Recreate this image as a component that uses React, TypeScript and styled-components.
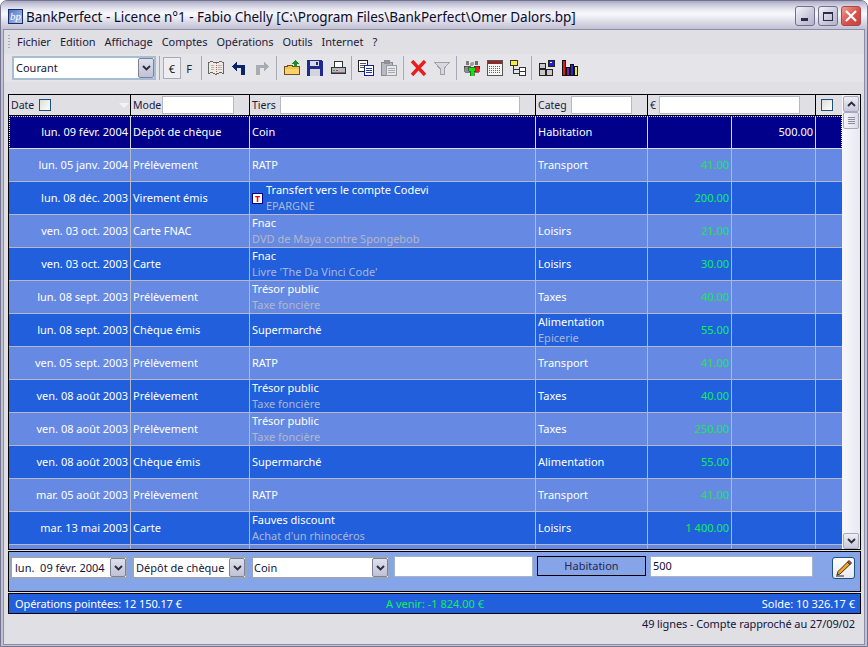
import React from "react";
import styled, { createGlobalStyle } from "styled-components";

const FONT = `"Noto Sans", "DejaVu Sans", sans-serif`;
const COLS = "122px 119px 286px 112px 84px 84px 26px";

const GlobalStyle = createGlobalStyle`
    html, body { margin: 0; padding: 0; background: #fff; overflow: hidden; }
    * { box-sizing: border-box; }
`;

const Window = styled.div`
    width: 868px;
    height: 647px;
    display: flex;
    flex-direction: column;
    padding: 0 2px 1px;
    border: 1px solid #74748f;
    border-radius: 7px 7px 0 0;
    background: #c2c2d6;
    font-family: ${FONT};
    font-size: 11px;
    color: #10103a;
`;

const TitleBar = styled.div`
    height: 28px;
    flex: none;
    display: flex;
    align-items: center;
    margin: 0 -2px;
    padding: 2px 6px 0 7px;
    border-radius: 6px 6px 0 0;
    background: linear-gradient(#a9a8c4 0, #c4c4d8 3px, #e6e6f0 8px, #f8f8fc 13px, #e2e2ec 19px, #c4c4d6 27px);
`;

const Logo = styled.div`
    width: 15px;
    height: 15px;
    display: flex;
    align-items: center;
    justify-content: center;
    border: 1px solid #1c2c6a;
    background: linear-gradient(135deg, #4d74c8, #b4c6ec);
    color: #fff;
    font-family: "Liberation Serif", serif;
    font-size: 11px;
    font-style: italic;
    line-height: 1;
`;

const TitleText = styled.div`
    margin: 1px 0 0 3px;
    flex: 1;
    font-size: 13.5px;
    letter-spacing: -0.04px;
    color: #0b0b2c;
    white-space: nowrap;
`;

const WinButtons = styled.div`
    display: flex;
    gap: 3px;
`;

const WinButton = styled.div<{ $close?: boolean }>`
    width: 20px;
    height: 20px;
    display: flex;
    align-items: center;
    justify-content: center;
    border: 1px solid ${(p) => (p.$close ? "#a84848" : "#6f6f8e")};
    border-radius: 3px;
    background: ${(p) =>
        p.$close
            ? "linear-gradient(135deg, #ee9f94, #d9504a 55%, #c04444)"
            : "linear-gradient(135deg, #f4f4f9, #c8c8da 60%, #b4b4ca)"};
`;

const Client = styled.div`
    flex: 1;
    display: flex;
    flex-direction: column;
    min-height: 0;
    padding: 0 3px 0 4px;
    border: 1px solid #8d8da8;
    background: #e0dfe3;
`;

const MenuBar = styled.div`
    height: 24px;
    flex: none;
    display: flex;
    align-items: center;
    position: relative;
    padding: 0 0 1px 9px;
    gap: 9px;
    letter-spacing: -0.05px;
    &::before {
        content: "";
        position: absolute;
        left: 0;
        top: 5px;
        width: 2px;
        height: 14px;
        background: repeating-linear-gradient(#a8a8b8 0 1px, transparent 1px 3px);
    }
`;

const MenuItem = styled.span`
    color: #1a1a3c;
`;

const ToolBar = styled.div`
    height: 28px;
    flex: none;
    display: flex;
    align-items: center;
    margin: 0 -3px 0 -4px;
    padding-left: 8px;
    background: #e4e4e9;
`;

const Sep = styled.div<{ $l: number; $r: number }>`
    width: 1px;
    height: 24px;
    margin: 0 ${(p) => p.$r}px 0 ${(p) => p.$l}px;
    background: #a8a8b4;
`;

const ToolIcons = styled.div`
    display: flex;
    gap: 7px;
`;

const ComboBox = styled.div<{ $w: number; $h?: number; $border?: string }>`
    width: ${(p) => p.$w}px;
    height: ${(p) => p.$h ?? 23}px;
    flex: none;
    display: flex;
    align-items: stretch;
    border: 2px solid ${(p) => p.$border ?? "#98a6bc"};
    background: #fff;
`;

const ComboText = styled.div<{ $pad: number }>`
    flex: 1;
    min-width: 0;
    padding-left: ${(p) => p.$pad}px;
    line-height: 20px;
    white-space: pre;
    overflow: hidden;
    color: #14143c;
`;

const ComboArrow = styled.div`
    width: 16px;
    flex: none;
    display: flex;
    align-items: center;
    justify-content: center;
    border: 1px solid #7d8296;
    border-radius: 2px;
    background: linear-gradient(#dfe0ec, #bfc2d6);
`;

const CurrencyOn = styled.div`
    width: 18px;
    height: 22px;
    display: flex;
    align-items: center;
    justify-content: center;
    border: 1px solid #a8a8b8;
    background: #eeeef2;
    color: #111;
`;

const CurrencyOff = styled.div`
    width: 16px;
    text-align: center;
    color: #222;
`;

const Table = styled.div`
    margin: 12px 0 0;
    height: 456px;
    flex: none;
    display: flex;
    border: 1px solid #000;
    background: #fff;
`;

const GridArea = styled.div`
    width: 833px;
    flex: none;
    display: flex;
    flex-direction: column;
`;

const Head = styled.div`
    height: 21px;
    flex: none;
    display: grid;
    grid-template-columns: 122px 119px 286px 112px 168px 26px;
    border-bottom: 1px solid #000;
    background: #e0dfe3;
    font-size: 10.5px;
`;

const HeadCell = styled.div<{ $last?: boolean }>`
    display: flex;
    align-items: center;
    padding: 0 ${(p) => (p.$last ? 0 : 15)}px 0 2px;
    border-right: ${(p) => (p.$last ? "none" : "1px solid #000")};
    color: #1a1a40;
`;

const HeadInput = styled.div<{ $w: number }>`
    width: ${(p) => p.$w}px;
    height: 18px;
    flex: none;
    margin-left: auto;
    border: 1px solid #b4b8c4;
    background: #fff;
`;

const HeadCheck = styled.div<{ $ml: number }>`
    width: 12px;
    height: 12px;
    flex: none;
    margin-left: ${(p) => p.$ml}px;
    border: 1px solid #1c5180;
    background: linear-gradient(135deg, #dcdcd4, #fff);
`;

const SortMark = styled.div`
    position: absolute;
    left: 119px;
    top: 103px;
    width: 0;
    height: 0;
    border-left: 5px solid transparent;
    border-right: 5px solid transparent;
    border-top: 5px solid #f4f4f6;
`;

const Rows = styled.div`
    flex: 1;
    min-height: 0;
    overflow: hidden;
`;

const TONES = { sel: "#00008b", light: "#668ae3", dark: "#215fdd" };

const Row = styled.div<{ $tone: keyof typeof TONES }>`
    height: 33px;
    display: grid;
    grid-template-columns: ${COLS};
    border-bottom: 1px solid ${(p) => (p.$tone === "sel" ? "#d8d8e8" : "#b4b8c8")};
    background: ${(p) => TONES[p.$tone]};
    color: #fff;
    ${(p) => p.$tone === "sel" && "outline: 1px dotted #f0f070; outline-offset: -1px;"}
`;

const Cell = styled.div<{ $right?: boolean; $sel?: boolean; $last?: boolean }>`
    display: flex;
    flex-direction: column;
    justify-content: center;
    align-items: ${(p) => (p.$right ? "flex-end" : "flex-start")};
    padding: 0 2px;
    border-right: ${(p) => (p.$last ? "none" : `1px solid ${p.$sel ? "#d8d8e8" : "#b4b8c8"}`)};
    line-height: 16px;
    white-space: nowrap;
    overflow: hidden;
`;

const Amount = styled.span<{ $light?: boolean }>`
    color: ${(p) => (p.$light ? "#1be84a" : "#10f05a")};
`;

const Sub = styled.div<{ $light?: boolean }>`
    color: ${(p) => (p.$light ? "#b2b8c8" : "#aab8d8")};
`;

const Transfer = styled.div`
    display: flex;
    align-items: center;
    gap: 3px;
`;

const TBadge = styled.div`
    width: 11px;
    height: 11px;
    display: flex;
    align-items: center;
    justify-content: center;
    border: 1px solid #000080;
    background: #fff;
    color: #f00000;
    font-size: 9px;
    font-weight: 700;
    line-height: 1;
`;

const ScrollBar = styled.div`
    width: 18px;
    flex: none;
    display: flex;
    flex-direction: column;
    padding: 1px 1px 0;
    background: linear-gradient(90deg, #f8f8fc, #e8e8f2);
`;

const ScrollBtn = styled.div`
    height: 16px;
    flex: none;
    display: flex;
    align-items: center;
    justify-content: center;
    border: 1px solid #a8a8bc;
    border-radius: 2px;
    background: linear-gradient(#eeeef4, #c8c8da);
`;

const ScrollThumb = styled.div`
    height: 17px;
    flex: none;
    display: flex;
    align-items: center;
    justify-content: center;
    border: 1px solid #a8a8bc;
    border-radius: 2px;
    background: linear-gradient(90deg, #f4f4f8, #dcdce8);
`;

const Grip = styled.div`
    width: 7px;
    height: 7px;
    background: repeating-linear-gradient(#8c8ca0 0 1px, transparent 1px 2px);
`;

const ScrollTrack = styled.div`
    flex: 1;
`;

const EditPanel = styled.div`
    margin-top: 1px;
    height: 41px;
    flex: none;
    display: flex;
    align-items: flex-start;
    gap: 4px;
    padding: 4px 1px 0;
    border: 1px solid #000;
    background: #86a5e8;
`;

const EditInput = styled.div<{ $w: number }>`
    width: ${(p) => p.$w}px;
    height: 21px;
    flex: none;
    padding-left: 2px;
    border: 1px solid #a4b4cc;
    background: #fff;
    line-height: 18px;
    color: #10103a;
`;

const CategButton = styled.div`
    width: 109px;
    height: 20px;
    flex: none;
    border: 1px solid #000;
    text-align: center;
    line-height: 18px;
    color: #26264e;
`;

const PencilButton = styled.div`
    width: 23px;
    height: 22px;
    margin: 1px 0 0 15px;
    flex: none;
    display: flex;
    align-items: center;
    justify-content: center;
    border: 1px solid #1c5180;
    border-radius: 3px;
    background: linear-gradient(#ffffff, #e8e8ee);
`;

const StatusBar = styled.div`
    margin-top: 1px;
    height: 21px;
    flex: none;
    display: grid;
    grid-template-columns: 1fr auto 1fr;
    align-items: center;
    padding: 0 5px 0 6px;
    border: 1px solid #000;
    background: #215fdd;
    color: #fff;
`;

const StatusLeft = styled.div`
    letter-spacing: -0.1px;
`;

const StatusGreen = styled.div`
    color: #10f060;
`;

const StatusRight = styled.div`
    text-align: right;
`;

const Footer = styled.div`
    padding: 2px 6px 0 0;
    text-align: right;
    letter-spacing: -0.1px;
    color: #14143c;
`;

const Chevron = ({ up }: { up?: boolean }) => (
    <svg width="9" height="6" viewBox="0 0 9 6">
        <path d={up ? "M1 5L4.5 1.5L8 5" : "M1 1L4.5 4.5L8 1"} fill="none" stroke="#2a2a3c" strokeWidth="1.8" />
    </svg>
);

const Svg = ({ children }: { children: React.ReactNode }) => (
    <svg width="16" height="16" viewBox="0 0 16 16" shapeRendering="crispEdges">
        {children}
    </svg>
);

const BookIcon = () => (
    <Svg>
        <path d="M0.5 2.5L4 1.5L8 3L12 1.5L15.5 2.5V13.5L12 12.5L8 14.5L4 12.5L0.5 13.5Z" fill="#ecebe6" stroke="#666" />
        <path d="M8 3V14" stroke="#c86060" strokeDasharray="1 1" />
        <path d="M2.5 5H6M2.5 7H6M2.5 9H6M10 5H13.5M10 7H13.5M10 9H13.5" stroke="#c0b4b4" />
    </Svg>
);

const BackIcon = ({ color = "#0a246a" }: { color?: string }) => (
    <Svg>
        <path d="M6 2L1 6.5L6 11V8H10V15H14V4.5H6Z" fill={color} />
    </Svg>
);

const ForwardIcon = () => (
    <Svg>
        <path d="M10 2L15 6.5L10 11V8H6V15H2V4.5H10Z" fill="#aaaab2" />
    </Svg>
);

const FolderIcon = () => (
    <Svg>
        <path d="M0.5 6.5H3L4 5H8V6.5H15.5V14.5H0.5Z" fill="#f6c14a" stroke="#6a5320" />
        <path d="M1 9H15V14H1Z" fill="#fbd26b" />
        <path d="M11 0L14.5 3.5H12.5V6.5H9.5V3.5H7.5Z" fill="#1d8a2c" />
    </Svg>
);

const SaveIcon = () => (
    <Svg>
        <path d="M0 0H14L16 2V16H0Z" fill="#1f2a8c" />
        <rect x="3" y="1" width="9" height="5" fill="#d8d8e4" />
        <rect x="9" y="2" width="2" height="3" fill="#1f2a8c" />
        <rect x="3" y="9" width="10" height="7" fill="#d4d4dc" />
    </Svg>
);

const PrintIcon = () => (
    <Svg>
        <rect x="4.5" y="1.5" width="8" height="6" fill="#fff" stroke="#333" />
        <path d="M1.5 7.5H15.5V13.5H1.5Z" fill="#b8b8c0" stroke="#333" />
        <rect x="3" y="10" width="2" height="1" fill="#30b030" />
        <rect x="6" y="10" width="2" height="1" fill="#d03030" />
        <rect x="2" y="12" width="13" height="1" fill="#707078" />
    </Svg>
);

const CopyIcon = () => (
    <Svg>
        <rect x="0.5" y="0.5" width="9" height="11" fill="#fff" stroke="#222" />
        <path d="M2 3H8M2 5H8M2 7H8" stroke="#555" />
        <rect x="6.5" y="5.5" width="9" height="10" fill="#fff" stroke="#10208c" />
        <path d="M8 8H14M8 10H14M8 12H14" stroke="#2038b0" />
    </Svg>
);

const PasteIcon = () => (
    <Svg>
        <rect x="0.5" y="2.5" width="11" height="13" fill="#b8b8c0" stroke="#88888f" />
        <rect x="3" y="0" width="6" height="4" fill="#90909a" />
        <rect x="5.5" y="5.5" width="10" height="10" fill="#e8e8ec" stroke="#9a9aa2" />
        <path d="M7 8H14M7 10H14M7 12H14" stroke="#a8a8b0" />
    </Svg>
);

const DeleteIcon = () => (
    <svg width="17" height="16" viewBox="0 0 17 16">
        <path d="M2 1L15 15M15 1L2 15" stroke="#e81c1c" strokeWidth="3.4" />
    </svg>
);

const FunnelIcon = () => (
    <Svg>
        <path d="M0.5 2.5H15.5L10 8.5V14.5L6 14.5V8.5Z" fill="#d8d8de" stroke="#a0a0a8" />
    </Svg>
);

const PeopleIcon = () => (
    <Svg>
        <circle cx="3.5" cy="3" r="2" fill="#7c7c7c" />
        <circle cx="12.5" cy="3" r="2" fill="#6c6c6c" />
        <path d="M0 6H6V12H1Z" fill="#8c8c8c" stroke="#333" strokeWidth="0.6" />
        <path d="M10 6H16L15 12H11Z" fill="#e82020" stroke="#402020" strokeWidth="0.6" />
        <circle cx="8" cy="4" r="2" fill="#a0a0a0" />
        <path d="M4.5 7H11.5V11H10V16H6V11H4.5Z" fill="#18e018" stroke="#104010" strokeWidth="0.6" />
    </Svg>
);

const CalendarIcon = () => (
    <Svg>
        <rect x="0.5" y="0.5" width="15" height="15" fill="#f4f4f0" stroke="#555" />
        <rect x="1" y="1" width="14" height="3" fill="#8c2a2a" />
        <path d="M2 6H14M2 8H14M2 10H14M2 12H14" stroke="#666" strokeDasharray="1 1" />
    </Svg>
);

const TreeIcon = () => (
    <Svg>
        <rect x="0.5" y="0.5" width="7" height="5" fill="#f8ee30" stroke="#333" />
        <path d="M3.5 6V13.5H9M3.5 9.5H9" fill="none" stroke="#333" />
        <rect x="9.5" y="7.5" width="6" height="4" fill="#fff" stroke="#333" />
        <rect x="9.5" y="11.5" width="6" height="4" fill="#fff" stroke="#333" />
    </Svg>
);

const WindowsIcon = () => (
    <Svg>
        <rect x="0.5" y="3.5" width="6" height="5" fill="#c8c8c8" stroke="#222" />
        <rect x="0.5" y="9.5" width="6" height="6" fill="#c8c8c8" stroke="#222" />
        <rect x="7.5" y="9.5" width="6" height="6" fill="#c8c8c8" stroke="#222" />
        <rect x="9.5" y="0.5" width="6" height="6" fill="#1c1ce0" stroke="#222" />
        <rect x="11" y="2" width="2" height="1" fill="#fff" />
    </Svg>
);

const ChartIcon = () => (
    <Svg>
        <rect x="0.5" y="0.5" width="3" height="15" fill="#e81818" stroke="#111" />
        <rect x="4.5" y="7.5" width="3" height="8" fill="#7a20a0" stroke="#111" />
        <rect x="8.5" y="4.5" width="3" height="11" fill="#2a2ac8" stroke="#111" />
        <rect x="12" y="6.5" width="3.5" height="9" fill="#f4ec18" stroke="#111" />
    </Svg>
);

const PencilIcon = () => (
    <svg width="18" height="18" viewBox="0 0 18 18">
        <path d="M5 15L2 16L3 12.5L12.5 3L15 5.5Z" fill="#f2a51e" stroke="#222" strokeWidth="0.9" />
        <path d="M12.5 3L14 1.5L16.5 4L15 5.5Z" fill="#dc4a30" stroke="#222" strokeWidth="0.9" />
        <path d="M1 17H9" stroke="#222" strokeWidth="1" />
    </svg>
);

type Op = {
    tone: "sel" | "light" | "dark";
    date: string;
    mode: string;
    tiers?: string;
    note?: string;
    transfer?: boolean;
    categ?: string;
    subCateg?: string;
    debit?: string;
    credit?: string;
};

const OPS: Op[] = [
    { tone: "sel", date: "lun. 09 févr. 2004", mode: "Dépôt de chèque", tiers: "Coin", categ: "Habitation", credit: "500.00" },
    { tone: "light", date: "lun. 05 janv. 2004", mode: "Prélèvement", tiers: "RATP", categ: "Transport", debit: "41.00" },
    { tone: "dark", date: "lun. 08 déc. 2003", mode: "Virement émis", tiers: "Transfert vers le compte Codevi", note: "EPARGNE", transfer: true, debit: "200.00" },
    { tone: "light", date: "ven. 03 oct. 2003", mode: "Carte FNAC", tiers: "Fnac", note: "DVD de Maya contre Spongebob", categ: "Loisirs", debit: "21.00" },
    { tone: "dark", date: "ven. 03 oct. 2003", mode: "Carte", tiers: "Fnac", note: "Livre 'The Da Vinci Code'", categ: "Loisirs", debit: "30.00" },
    { tone: "light", date: "lun. 08 sept. 2003", mode: "Prélèvement", tiers: "Trésor public", note: "Taxe foncière", categ: "Taxes", debit: "40.00" },
    { tone: "dark", date: "lun. 08 sept. 2003", mode: "Chèque émis", tiers: "Supermarché", categ: "Alimentation", subCateg: "Epicerie", debit: "55.00" },
    { tone: "light", date: "ven. 05 sept. 2003", mode: "Prélèvement", tiers: "RATP", categ: "Transport", debit: "41.00" },
    { tone: "dark", date: "ven. 08 août 2003", mode: "Prélèvement", tiers: "Trésor public", note: "Taxe foncière", categ: "Taxes", debit: "40.00" },
    { tone: "light", date: "ven. 08 août 2003", mode: "Prélèvement", tiers: "Trésor public", note: "Taxe foncière", categ: "Taxes", debit: "250.00" },
    { tone: "dark", date: "ven. 08 août 2003", mode: "Chèque émis", tiers: "Supermarché", categ: "Alimentation", debit: "55.00" },
    { tone: "light", date: "mar. 05 août 2003", mode: "Prélèvement", tiers: "RATP", categ: "Transport", debit: "41.00" },
    { tone: "dark", date: "mar. 13 mai 2003", mode: "Carte", tiers: "Fauves discount", note: "Achat d'un rhinocéros", categ: "Loisirs", debit: "1 400.00" },
    { tone: "light", date: "", mode: "" },
];

const MENU = ["Fichier", "Edition", "Affichage", "Comptes", "Opérations", "Outils", "Internet", "?"];

function OpRow({ op }: { op: Op }) {
    const sel = op.tone === "sel";
    const light = op.tone === "light";
    const tiers = (
        <>
            <div>{op.tiers}</div>
            {op.note && <Sub $light={light}>{op.note}</Sub>}
        </>
    );
    return (
        <Row $tone={op.tone}>
            <Cell $right $sel={sel}>{op.date}</Cell>
            <Cell $sel={sel}>{op.mode}</Cell>
            <Cell $sel={sel}>
                {op.transfer ? (
                    <Transfer>
                        <TBadge>T</TBadge>
                        <div>{tiers}</div>
                    </Transfer>
                ) : (
                    tiers
                )}
            </Cell>
            <Cell $sel={sel}>
                <div>{op.categ}</div>
                {op.subCateg && <Sub>{op.subCateg}</Sub>}
            </Cell>
            <Cell $right $sel={sel}>
                <Amount $light={light}>{op.debit}</Amount>
            </Cell>
            <Cell $right $sel={sel}>{op.credit}</Cell>
            <Cell $last />
        </Row>
    );
}

export default function App() {
    return (
        <Window>
            <GlobalStyle />
            <TitleBar>
                <Logo>bp</Logo>
                <TitleText>BankPerfect - Licence n°1 - Fabio Chelly [C:\Program Files\BankPerfect\Omer Dalors.bp]</TitleText>
                <WinButtons>
                    <WinButton>
                        <svg width="12" height="12" viewBox="0 0 12 12">
                            <rect x="2" y="8" width="7" height="3" fill="#2c2c48" />
                        </svg>
                    </WinButton>
                    <WinButton>
                        <svg width="12" height="12" viewBox="0 0 12 12">
                            <path d="M1 2H11V11H1Z M2 4V10H10V4Z" fill="#2c2c48" fillRule="evenodd" />
                        </svg>
                    </WinButton>
                    <WinButton $close>
                        <svg width="14" height="14" viewBox="0 0 14 14">
                            <path d="M2 2L12 12M12 2L2 12" stroke="#fff" strokeWidth="2.2" />
                        </svg>
                    </WinButton>
                </WinButtons>
            </TitleBar>
            <Client>
                <MenuBar>
                    {MENU.map((item) => (
                        <MenuItem key={item}>{item}</MenuItem>
                    ))}
                </MenuBar>
                <ToolBar>
                    <ComboBox $w={144} $h={24} $border="#a8bcd4">
                        <ComboText $pad={2}>Courant</ComboText>
                        <ComboArrow>
                            <Chevron />
                        </ComboArrow>
                    </ComboBox>
                    <Sep $l={3} $r={3} />
                    <CurrencyOn>€</CurrencyOn>
                    <CurrencyOff>F</CurrencyOff>
                    <Sep $l={4} $r={6} />
                    <ToolIcons>
                        <BookIcon />
                        <BackIcon />
                        <ForwardIcon />
                    </ToolIcons>
                    <Sep $l={6} $r={7} />
                    <ToolIcons>
                        <FolderIcon />
                        <SaveIcon />
                        <PrintIcon />
                    </ToolIcons>
                    <Sep $l={5} $r={6} />
                    <ToolIcons>
                        <CopyIcon />
                        <PasteIcon />
                    </ToolIcons>
                    <Sep $l={6} $r={6} />
                    <ToolIcons>
                        <DeleteIcon />
                        <FunnelIcon />
                    </ToolIcons>
                    <Sep $l={6} $r={7} />
                    <ToolIcons>
                        <PeopleIcon />
                        <CalendarIcon />
                        <TreeIcon />
                    </ToolIcons>
                    <Sep $l={5} $r={7} />
                    <ToolIcons>
                        <WindowsIcon />
                        <ChartIcon />
                    </ToolIcons>
                </ToolBar>
                <Table>
                    <GridArea>
                        <Head>
                            <HeadCell>
                                Date
                                <HeadCheck $ml={5} />
                                <SortMark />
                            </HeadCell>
                            <HeadCell>
                                Mode
                                <HeadInput $w={72} />
                            </HeadCell>
                            <HeadCell>
                                Tiers
                                <HeadInput $w={240} />
                            </HeadCell>
                            <HeadCell>
                                Categ
                                <HeadInput $w={61} />
                            </HeadCell>
                            <HeadCell>
                                €
                                <HeadInput $w={141} />
                            </HeadCell>
                            <HeadCell $last>
                                <HeadCheck $ml={3} />
                            </HeadCell>
                        </Head>
                        <Rows>
                            {OPS.map((op, i) => (
                                <OpRow key={i} op={op} />
                            ))}
                        </Rows>
                    </GridArea>
                    <ScrollBar>
                        <ScrollBtn>
                            <Chevron up />
                        </ScrollBtn>
                        <ScrollThumb>
                            <Grip />
                        </ScrollThumb>
                        <ScrollTrack />
                        <ScrollBtn>
                            <Chevron />
                        </ScrollBtn>
                    </ScrollBar>
                </Table>
                <EditPanel>
                    <ComboBox $w={118}>
                        <ComboText $pad={3}>{"lun.  09 févr. 2004"}</ComboText>
                        <ComboArrow>
                            <Chevron />
                        </ComboArrow>
                    </ComboBox>
                    <ComboBox $w={115}>
                        <ComboText $pad={2}>Dépôt de chèque</ComboText>
                        <ComboArrow>
                            <Chevron />
                        </ComboArrow>
                    </ComboBox>
                    <ComboBox $w={139}>
                        <ComboText $pad={1}>Coin</ComboText>
                        <ComboArrow>
                            <Chevron />
                        </ComboArrow>
                    </ComboBox>
                    <EditInput $w={139} />
                    <CategButton>Habitation</CategButton>
                    <EditInput $w={163}>500</EditInput>
                    <PencilButton>
                        <PencilIcon />
                    </PencilButton>
                </EditPanel>
                <StatusBar>
                    <StatusLeft>Opérations pointées: 12 150.17 €</StatusLeft>
                    <StatusGreen>A venir: -1 824.00 €</StatusGreen>
                    <StatusRight>Solde: 10 326.17 €</StatusRight>
                </StatusBar>
                <Footer>49 lignes - Compte rapproché au 27/09/02</Footer>
            </Client>
        </Window>
    );
}
